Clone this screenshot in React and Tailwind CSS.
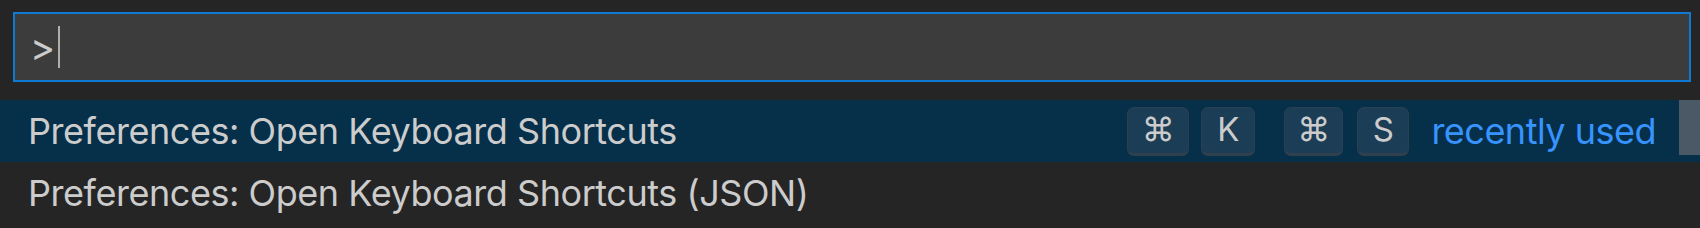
import React from "react";

const Key = ({ children, className = "" }) => (
  <span
    className={`flex h-[49px] items-center justify-center rounded-[7px] border border-[#2a3f50] border-b-[3px] border-b-[#30404d] bg-[#1b3d56] text-[33px] text-[#cccccc] ${className}`}
  >
    {children}
  </span>
);

const App = () => {
  return (
    <div
      className="h-[228px] w-[1700px] overflow-hidden bg-[#252526] text-[#cccccc]"
      style={{ fontFamily: "Inter, 'Noto Sans', sans-serif" }}
    >
      <div className="pt-[12px] pl-[13px] pr-[9px]">
        <div className="flex h-[70px] items-center border-2 border-[#0e7ad3] bg-[#3c3c3c] pl-[15px]">
          <span className="text-[38px] leading-none">&gt;</span>
          <span className="ml-[3px] h-[42px] w-[2px] bg-[#aeafad]" />
        </div>
      </div>

      <div className="mt-[18px] flex h-[62px] items-center bg-[#062f4a]">
        <span className="flex-1 pl-[28px] text-[36px] tracking-[-0.45px]">
          Preferences: Open Keyboard Shortcuts
        </span>
        <div className="flex items-center">
          <div className="flex gap-[12px]">
            <Key className="w-[62px]">⌘</Key>
            <Key className="w-[54px]">K</Key>
          </div>
          <div className="ml-[29px] flex gap-[14px]">
            <Key className="w-[59px]">⌘</Key>
            <Key className="w-[52px]">S</Key>
          </div>
          <span className="ml-[22px] text-[36px] text-[#3794ff] tracking-[-0.5px]">recently used</span>
        </div>
        <div className="ml-[23px] h-[55px] w-[21px] self-start bg-[#4b5966]" />
      </div>

      <div className="flex h-[62px] items-center">
        <span className="pl-[28px] text-[36px] tracking-[-0.45px]">
          Preferences: Open Keyboard Shortcuts (JSON)
        </span>
      </div>
    </div>
  );
};

export default App;
